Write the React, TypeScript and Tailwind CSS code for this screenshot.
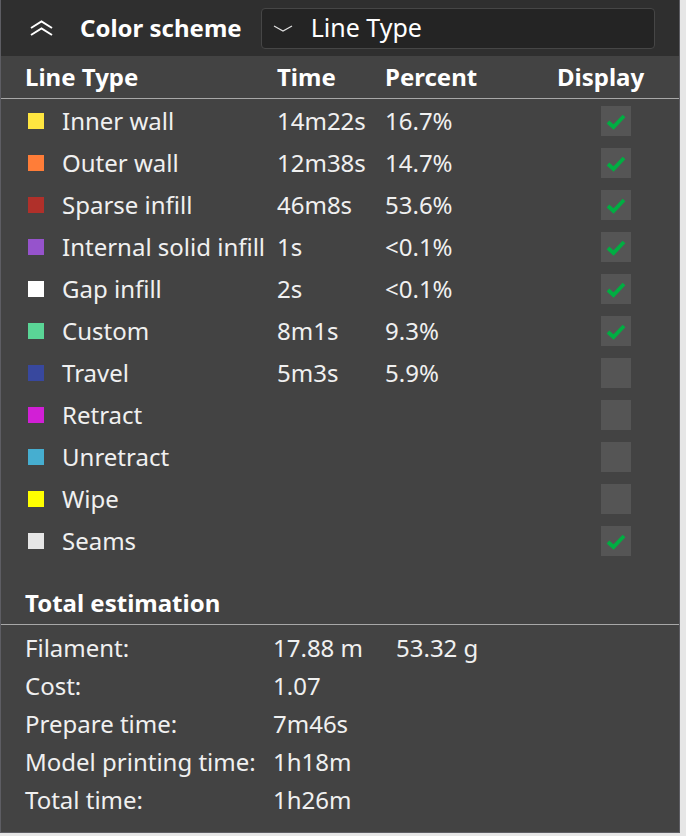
import React from "react";

type LineType = {
  name: string;
  color: string;
  time?: string;
  percent?: string;
  shown: boolean;
};

const LINES: LineType[] = [
  { name: "Inner wall", color: "bg-[#ffe640]", time: "14m22s", percent: "16.7%", shown: true },
  { name: "Outer wall", color: "bg-[#ff7d38]", time: "12m38s", percent: "14.7%", shown: true },
  { name: "Sparse infill", color: "bg-[#b0302a]", time: "46m8s", percent: "53.6%", shown: true },
  { name: "Internal solid infill", color: "bg-[#9653cc]", time: "1s", percent: "<0.1%", shown: true },
  { name: "Gap infill", color: "bg-white", time: "2s", percent: "<0.1%", shown: true },
  { name: "Custom", color: "bg-[#5ad596]", time: "8m1s", percent: "9.3%", shown: true },
  { name: "Travel", color: "bg-[#38489e]", time: "5m3s", percent: "5.9%", shown: false },
  { name: "Retract", color: "bg-[#d21fd6]", shown: false },
  { name: "Unretract", color: "bg-[#46aed0]", shown: false },
  { name: "Wipe", color: "bg-[#ffff00]", shown: false },
  { name: "Seams", color: "bg-[#e6e6e6]", shown: true },
];

const TOTALS: { label: string; value: string; extra?: string }[] = [
  { label: "Filament:", value: "17.88 m", extra: "53.32 g" },
  { label: "Cost:", value: "1.07" },
  { label: "Prepare time:", value: "7m46s" },
  { label: "Model printing time:", value: "1h18m" },
  { label: "Total time:", value: "1h26m" },
];

function Checkbox({ checked }: { checked: boolean }) {
  return (
    <div className="flex h-[30px] w-[30px] items-center justify-center bg-[#555555]">
      {checked && (
        <svg width="22" height="18" viewBox="0 0 22 18" fill="none">
          <path d="M3 10 L8.5 15 L19 4" stroke="#00ae42" strokeWidth="3.8" strokeLinejoin="miter" />
        </svg>
      )}
    </div>
  );
}

export default function App() {
  return (
    <div className="min-h-[836px] w-[686px] bg-[#e6e6e6] font-['Noto_Sans','Roboto',sans-serif] text-[#f0f0f0]">
      <div className="w-[680px] border-r border-b border-l border-[#5d5d63] bg-[#434343] pb-[13px]">
        {/* header */}
        <div className="flex h-14 items-center bg-[#2f2f2f]">
          <svg className="ml-[28px]" width="25" height="16" viewBox="0 0 25 16" fill="none">
            <path d="M2 8 L12.5 1.5 L23 8 M2 15 L12.5 8.5 L23 15" stroke="#ffffff" strokeWidth="2" />
          </svg>
          <span className="ml-[26px] text-[24px] font-bold text-white">Color scheme</span>
          <div className="ml-[19px] flex h-[41px] w-[394px] items-center rounded-[4px] border border-[#464646] bg-[#242424]">
            <svg className="ml-[11px]" width="20" height="10" viewBox="0 0 20 10" fill="none">
              <path d="M1 3 L10 8 L19 3" stroke="#e0e0e0" strokeWidth="1.2" />
            </svg>
            <span className="ml-[18px] text-[25px] text-white">Line Type</span>
          </div>
        </div>

        {/* table header */}
        <div className="grid h-[43px] grid-cols-[252px_108px_172px_1fr] items-center border-b border-[#a8a8a8] pl-[24px] text-[24px] font-bold text-white">
          <span>Line Type</span>
          <span>Time</span>
          <span>Percent</span>
          <span>Display</span>
        </div>

        <div className="pt-[1px]">
          {LINES.map((l) => (
            <div
              key={l.name}
              className="grid h-[42px] grid-cols-[252px_108px_172px_1fr] items-center pl-[24px] text-[24px]"
            >
              <div className="flex items-center">
                <span className={`ml-[3px] h-4 w-4 ${l.color}`} />
                <span className="ml-[18px] whitespace-nowrap">{l.name}</span>
              </div>
              <span>{l.time}</span>
              <span>{l.percent}</span>
              <div className="pl-[44px]">
                <Checkbox checked={l.shown} />
              </div>
            </div>
          ))}
        </div>

        {/* totals */}
        <div className="mt-[19px] flex h-[44px] items-center border-b border-[#a8a8a8] pl-[24px] text-[24px] font-bold text-white">
          Total estimation
        </div>
        <div className="pt-[4px]">
          {TOTALS.map((t) => (
            <div key={t.label} className="flex h-[38px] items-center pl-[24px] text-[24px]">
              <span className="w-[248px] whitespace-nowrap">{t.label}</span>
              <span className="w-[123px]">{t.value}</span>
              {t.extra && <span>{t.extra}</span>}
            </div>
          ))}
        </div>
      </div>
    </div>
  );
}
